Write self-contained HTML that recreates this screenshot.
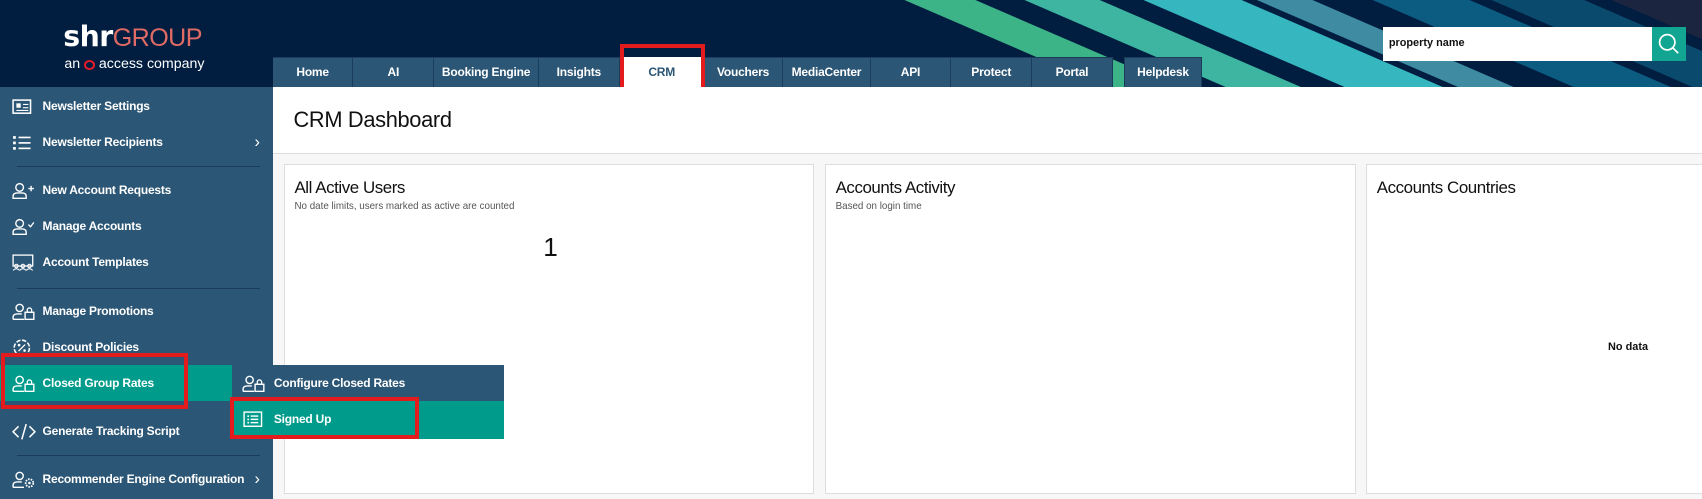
<!DOCTYPE html>
<html><head><meta charset="utf-8"><style>
html,body{margin:0;padding:0;overflow:hidden;background:#fff}
#w{position:relative;width:1560px;height:457px;zoom:1.091;font-family:"Liberation Sans",Arial,sans-serif;overflow:hidden;background:#f7f7f7}
.abs{position:absolute}
#hdr{left:0;top:0;width:1560px;height:80px;background:#011d40}
.tab{position:absolute;top:52px;height:28px;background:#2c5675;border-right:1px solid #1b3d5c;border-top:1px solid #1b3d5c;color:#fff;font-size:11px;letter-spacing:-0.2px;font-weight:bold;display:flex;align-items:center;justify-content:center;box-sizing:border-box}
#side{left:0;top:80px;width:250px;height:377px;background:#2c5675}
.it{position:absolute;left:0;width:250px;height:33px;color:#fff;font-size:11px;letter-spacing:-0.2px;font-weight:bold;display:flex;align-items:center}
.it svg{position:absolute;left:11px}
.it span{position:absolute;left:39px}
.div{position:absolute;left:16px;width:222px;height:1px;background:#1b3d5c}
.chev{position:absolute;right:12px;color:#fff;font-size:15px;font-weight:normal}
.card{position:absolute;top:150px;height:303px;background:#fff;border:1px solid #ddd;box-sizing:border-box}
.card h3{margin:0;position:absolute;left:9px;top:12px;font-size:15.5px;letter-spacing:-0.4px;font-weight:normal;color:#111}
.card p{margin:0;position:absolute;left:9px;top:33px;font-size:9px;color:#555}
.red{position:absolute;border:4px solid #e41b1d;box-sizing:border-box}
</style></head><body><div id="w">
<div id="hdr" class="abs">
<svg class="abs" style="left:0;top:0" width="1560" height="80">
<polygon points="829,0 894,0 1079,80 1014,80" fill="#3db388"/>
<polygon points="939,0 1008,0 1193,80 1124,80" fill="#3db5a0"/>
<polygon points="1048,0 1138,0 1323,80 1233,80" fill="#36b6bf"/>
<polygon points="1152,0 1203,0 1388,80 1337,80" fill="#3f8ca2"/>
<polygon points="1258,0 1347,0 1532,80 1443,80" fill="#0c5c82"/>
<polygon points="1367,0 1452,0 1637,80 1552,80" fill="#0a4a6d"/>
<polygon points="1477,0 1560,0 1560,40 1560,80 1662,80" fill="#1c2540"/>
</svg>
<div class="abs" style="left:58px;top:20px;font-size:27px;letter-spacing:-0.5px;line-height:28px"><b style="color:#fff;font-family:'DejaVu Sans',sans-serif;font-size:26px">shr</b><span style="color:#e06b64;font-size:23px">GROUP</span></div>
<div class="abs" style="left:59px;top:51px;color:#fff;font-size:13px">an <span style="display:inline-block;width:10px;height:9px;border:2.5px solid #e41b2b;border-radius:50%;vertical-align:-2px;box-sizing:border-box"></span> access company</div>
<div class="tab" style="left:250px;width:74px">Home</div>
<div class="tab" style="left:324px;width:74px">AI</div>
<div class="tab" style="left:398px;width:96px">Booking Engine</div>
<div class="tab" style="left:494px;width:74px">Insights</div>
<div class="tab" style="left:568px;width:77px;background:#fff;color:#2c5675;border:none">CRM</div>
<div class="tab" style="left:645px;width:73px">Vouchers</div>
<div class="tab" style="left:718px;width:80px">MediaCenter</div>
<div class="tab" style="left:798px;width:74px">API</div>
<div class="tab" style="left:872px;width:74px">Protect</div>
<div class="tab" style="left:946px;width:74px">Portal</div>
<div class="tab" style="left:1030px;width:72px;border-left:1px solid #1b3d5c">Helpdesk</div>
<div class="abs" style="left:1268px;top:25px;width:246px;height:31px;background:#fff;font-size:10px;font-weight:bold;color:#111;line-height:31px;padding-left:5px;box-sizing:border-box">property name</div>
<div class="abs" style="left:1514px;top:25px;width:31px;height:31px;background:#12a591"><svg width="31" height="31"><circle cx="14" cy="14" r="7" fill="none" stroke="#fff" stroke-width="1.6"/><line x1="19" y1="19" x2="24" y2="24" stroke="#fff" stroke-width="1.6"/></svg></div>
</div>
<div class="red" style="left:568px;top:40px;width:78px;height:51px"></div>
<div class="abs" style="left:250px;top:80px;width:1310px;height:60px;background:#fff;border-bottom:1px solid #ddd"></div>
<div class="abs" style="left:269px;top:98px;font-size:20px;color:#111;letter-spacing:-0.3px">CRM Dashboard</div>
<div class="card" style="left:260px;width:486px"><h3>All Active Users</h3><p>No date limits, users marked as active are counted</p><div style="position:absolute;left:237px;top:62px;font-size:24px;color:#111">1</div></div>
<div class="card" style="left:756px;width:487px"><h3>Accounts Activity</h3><p>Based on login time</p></div>
<div class="card" style="left:1252px;width:320px"><h3>Accounts Countries</h3><div style="position:absolute;left:221px;top:162px;font-size:10px;font-weight:bold;color:#111">No data</div></div>
<div id="side" class="abs">
<div class="it" style="top:1px"><svg width="18" height="14"><rect x="1" y="1" width="16" height="12" fill="none" stroke="#fff" stroke-width="1.4"/><rect x="4" y="4" width="4" height="4" fill="#fff"/><line x1="10" y1="5" x2="15" y2="5" stroke="#fff"/><line x1="10" y1="8" x2="15" y2="8" stroke="#fff"/><line x1="4" y1="10.5" x2="15" y2="10.5" stroke="#fff"/></svg><span>Newsletter Settings</span></div>
<div class="it" style="top:34px"><svg width="18" height="14"><g fill="#fff"><rect x="1" y="1" width="2.5" height="2.5"/><rect x="1" y="6" width="2.5" height="2.5"/><rect x="1" y="11" width="2.5" height="2.5"/><rect x="6" y="1.5" width="11" height="1.5"/><rect x="6" y="6.5" width="11" height="1.5"/><rect x="6" y="11.5" width="11" height="1.5"/></g></svg><span>Newsletter Recipients</span><b class="chev">&#8250;</b></div>
<div class="div" style="top:72px"></div>
<div class="it" style="top:78px"><svg width="22" height="16"><circle cx="7" cy="5" r="3.5" fill="none" stroke="#fff" stroke-width="1.3"/><path d="M1 15 v-2 q0-3 4-3 h4 q4 0 4 3 v2 z" fill="none" stroke="#fff" stroke-width="1.3"/><path d="M15 6 h5 M17.5 3.5 v5" stroke="#fff" stroke-width="1.3"/></svg><span>New Account Requests</span></div>
<div class="it" style="top:111px"><svg width="22" height="16"><circle cx="7" cy="5" r="3.5" fill="none" stroke="#fff" stroke-width="1.3"/><path d="M1 15 v-2 q0-3 4-3 h4 q4 0 4 3 v2 z" fill="none" stroke="#fff" stroke-width="1.3"/><path d="M15 6 l2 2 l3-4" fill="none" stroke="#fff" stroke-width="1.2"/></svg><span>Manage Accounts</span></div>
<div class="it" style="top:144px"><svg width="22" height="16"><rect x="1" y="1" width="18" height="10" fill="none" stroke="#fff" stroke-width="1.2"/><g fill="none" stroke="#fff"><circle cx="4" cy="11" r="1.6"/><circle cx="10" cy="11" r="1.6"/><circle cx="16" cy="11" r="1.6"/><path d="M1 15 q3-3 6 0 M7 15 q3-3 6 0 M13 15 q3-3 6 0"/></g></svg><span>Account Templates</span></div>
<div class="div" style="top:184px"></div>
<div class="it" style="top:189px"><svg width="22" height="16"><circle cx="7" cy="4.5" r="3.3" fill="none" stroke="#fff" stroke-width="1.3"/><path d="M1 15 v-2 q0-3 4-3 h4" fill="none" stroke="#fff" stroke-width="1.3"/><path d="M1 15 h10" stroke="#fff" stroke-width="1.3"/><rect x="12" y="8.5" width="8" height="6.5" fill="none" stroke="#fff" stroke-width="1.3"/><path d="M14 8.5 v-2 a2 2 0 0 1 4 0 v2" fill="none" stroke="#fff" stroke-width="1.2"/></svg><span>Manage Promotions</span></div>
<div class="it" style="top:222px"><svg width="22" height="18"><circle cx="9" cy="9" r="7" fill="none" stroke="#fff" stroke-width="1.4" stroke-dasharray="4 1.5"/><path d="M6 12 l6-6" stroke="#fff" stroke-width="1.2"/><circle cx="6.5" cy="6.5" r="1.2" fill="#fff"/><circle cx="11.5" cy="11.5" r="1.2" fill="#fff"/></svg><span>Discount Policies</span></div>
<div class="it" style="top:255px;background:#009b8a;width:250px"><svg width="22" height="16"><circle cx="7" cy="4.5" r="3.3" fill="none" stroke="#fff" stroke-width="1.3"/><path d="M1 15 v-2 q0-3 4-3 h4" fill="none" stroke="#fff" stroke-width="1.3"/><path d="M1 15 h10" stroke="#fff" stroke-width="1.3"/><rect x="12" y="8.5" width="8" height="6.5" fill="none" stroke="#fff" stroke-width="1.3"/><path d="M14 8.5 v-2 a2 2 0 0 1 4 0 v2" fill="none" stroke="#fff" stroke-width="1.2"/></svg><span>Closed Group Rates</span></div>
<div class="it" style="top:299px"><svg width="22" height="16"><path d="M6 3 l-5 5 l5 5 M16 3 l5 5 l-5 5 M13 1 l-4 14" fill="none" stroke="#fff" stroke-width="1.4"/></svg><span>Generate Tracking Script</span></div>
<div class="div" style="top:337px"></div>
<div class="it" style="top:343px"><svg width="22" height="16"><circle cx="7" cy="4.5" r="3.3" fill="none" stroke="#fff" stroke-width="1.3"/><path d="M1 15 v-2 q0-3 4-3 h4 M1 15 h10" fill="none" stroke="#fff" stroke-width="1.3"/><circle cx="16" cy="11" r="3.5" fill="none" stroke="#fff" stroke-width="1.6" stroke-dasharray="1.5 1"/><circle cx="16" cy="11" r="1.2" fill="#fff"/></svg><span>Recommender Engine Configuration</span><b class="chev">&#8250;</b></div>
</div>
<div class="abs" style="left:213px;top:335px;width:249px;height:33px;background:#2c5675"></div>
<div class="abs" style="left:213px;top:368px;width:249px;height:34px;background:#009b8a"></div>
<div class="it" style="left:213px;top:335px;width:249px"><svg width="22" height="16" style="left:9px"><circle cx="7" cy="4.5" r="3.3" fill="none" stroke="#fff" stroke-width="1.3"/><path d="M1 15 v-2 q0-3 4-3 h4 M1 15 h10" fill="none" stroke="#fff" stroke-width="1.3"/><rect x="12" y="8.5" width="8" height="6.5" fill="none" stroke="#fff" stroke-width="1.3"/><path d="M14 8.5 v-2 a2 2 0 0 1 4 0 v2" fill="none" stroke="#fff" stroke-width="1.2"/></svg><span style="left:38px">Configure Closed Rates</span></div>
<div class="it" style="left:213px;top:368px;width:249px"><svg width="20" height="16" style="left:10px"><rect x="1" y="1" width="16" height="13" fill="none" stroke="#fff" stroke-width="1.3"/><g fill="#fff"><rect x="4" y="4" width="1.5" height="1.5"/><rect x="4" y="7" width="1.5" height="1.5"/><rect x="4" y="10" width="1.5" height="1.5"/><rect x="7" y="4" width="7" height="1.3"/><rect x="7" y="7" width="7" height="1.3"/><rect x="7" y="10" width="7" height="1.3"/></g></svg><span style="left:38px">Signed Up</span></div>
<div class="red" style="left:1px;top:324px;width:171px;height:51px"></div>
<div class="red" style="left:211px;top:364px;width:173px;height:38px"></div>
</div></body></html>
